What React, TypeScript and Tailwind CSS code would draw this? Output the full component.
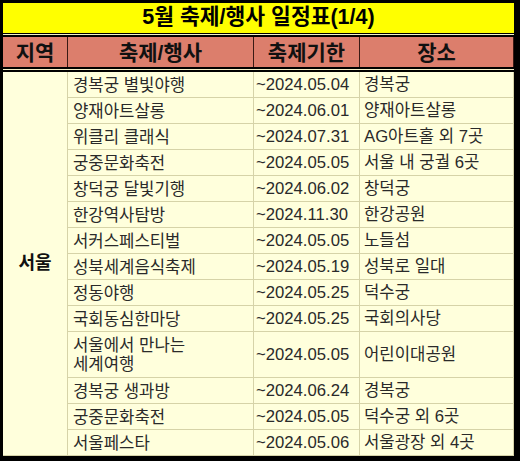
const rows = [
  { name: "경복궁 별빛야행", until: "~2024.05.04", place: "경복궁" },
  { name: "양재아트살롱", until: "~2024.06.01", place: "양재아트살롱" },
  { name: "위클리 클래식", until: "~2024.07.31", place: "AG아트홀 외 7곳" },
  { name: "궁중문화축전", until: "~2024.05.05", place: "서울 내 궁궐 6곳" },
  { name: "창덕궁 달빛기행", until: "~2024.06.02", place: "창덕궁" },
  { name: "한강역사탐방", until: "~2024.11.30", place: "한강공원" },
  { name: "서커스페스티벌", until: "~2024.05.05", place: "노들섬" },
  { name: "성북세계음식축제", until: "~2024.05.19", place: "성북로 일대" },
  { name: "정동야행", until: "~2024.05.25", place: "덕수궁" },
  { name: "국회동심한마당", until: "~2024.05.25", place: "국회의사당" },
  { name: "서울에서 만나는\n세계여행", until: "~2024.05.05", place: "어린이대공원", tall: true },
  { name: "경복궁 생과방", until: "~2024.06.24", place: "경복궁" },
  { name: "궁중문화축전", until: "~2024.05.05", place: "덕수궁 외 6곳" },
  { name: "서울페스타", until: "~2024.05.06", place: "서울광장 외 4곳" },
];

// double rule between title / header / body, like the sheet's border
const Rule = () => (
  <div className="flex flex-col">
    <div className="h-[1px] bg-black" />
    <div className="h-[1px] bg-[#f4f0c8]" />
    <div className="h-[2px] bg-black" />
  </div>
);

export default function App() {
  return (
    <div className="w-[520px] h-[461px] overflow-hidden bg-black pl-[3px] pt-[3px] font-['Liberation_Sans','Noto_Sans_CJK_KR',sans-serif]">
      <div className="w-[511px] flex flex-col">
        {/* Title */}
        <div className="h-[30px] bg-[#ffff00] flex items-center justify-center text-[21.5px] font-bold text-black leading-none">
          5월 축제/행사 일정표(1/4)
        </div>
        <Rule />

        {/* Header */}
        <div className="h-[30px] bg-[#dc7e6c] grid grid-cols-[65px_186px_106px_154px] text-[21px] font-bold text-[#111] leading-none">
          <div className="flex items-center justify-center border-r border-[#3a1a14]">지역</div>
          <div className="flex items-center justify-center border-r border-[#3a1a14]">축제/행사</div>
          <div className="flex items-center justify-center border-r border-[#3a1a14]">축제기한</div>
          <div className="flex items-center justify-center border-r border-[#3a1a14]">장소</div>
        </div>
        <div className="flex flex-col">
          <div className="h-[2px] bg-black" />
          <div className="h-[1px] bg-[#f4f0c8]" />
          <div className="h-[2px] bg-black" />
        </div>

        {/* Body */}
        <div className="grid grid-cols-[65px_186px_106px_154px] bg-[#ffffdc] text-[16.7px] text-[#2a2a2a]">
          <div className="row-span-14 flex items-center justify-center border-r border-b border-[#d6d3a8] text-[18px] font-bold text-[#111]">
            서울
          </div>
          {rows.map((r, i) => {
            const h = r.tall ? "h-[46px]" : "h-[26px]";
            return (
              <div key={i} className="contents">
                <div className={`${h} flex items-center pl-[5px] pt-[1px] border-r border-b border-[#d6d3a8] whitespace-pre-line leading-[19px]`}>
                  {r.name}
                </div>
                <div className={`${h} flex items-center pl-[2px] pt-[1px] border-r border-b border-[#d6d3a8] leading-none`}>
                  {r.until}
                </div>
                <div className={`${h} flex items-center pl-[4px] pt-[1px] border-r border-b border-[#d6d3a8] leading-none`}>
                  {r.place}
                </div>
              </div>
            );
          })}
        </div>
      </div>
    </div>
  );
}
